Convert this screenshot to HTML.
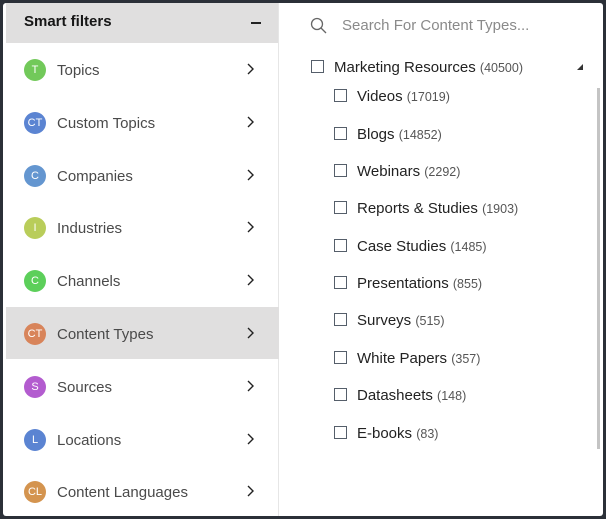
<!DOCTYPE html>
<html><head><style>
*{margin:0;padding:0;box-sizing:border-box}
body{width:606px;height:519px;background:#2b3038;font-family:"Liberation Sans",sans-serif;overflow:hidden;position:relative}
.frame{position:absolute;left:3px;top:3px;width:600px;height:513px;background:#fff;border-radius:3px;overflow:hidden}
.left{position:absolute;left:3px;top:0;width:273px;height:513px;border-right:1px solid #e6e6e6}
.hdr{height:40px;background:#e0dfdf;position:relative;font-weight:bold;font-size:15px;color:#161616;line-height:38px;padding-left:18px}
.hdr i{position:absolute;right:17px;top:19px;width:10px;height:1.5px;background:#222}
.row{position:absolute;left:0;width:273px;height:52px;font-size:15px;color:#4a4a4a}
.row.sel{background:#e0dfdf}
.row .ic{position:absolute;left:18px;top:16px;width:22px;height:22px;border-radius:50%;color:#fff;font-size:11px;text-align:center;line-height:22px}
.row .t{position:absolute;left:51px;top:2px;line-height:52px}
.row .ch{position:absolute;left:238px;top:16px;width:14px;height:20px}
.right{position:absolute;left:277px;top:0;width:323px;height:513px}
.search{position:absolute;left:62px;top:14px;font-size:15px;color:#8a8a8a;line-height:18px}
.item{position:absolute;font-size:15px;color:#222;white-space:nowrap;line-height:20px}
.item .cb{display:inline-block;width:13px;height:13px;border:1.5px solid #555e6a;vertical-align:-1px;margin-right:10px}
.item small{font-size:12.5px;color:#555}
.sb{position:absolute;left:594px;top:85px;width:3px;height:361px;background:#c4c4c4}
</style></head><body>
<div class="frame">
<div class="left">
<div class="hdr">Smart filters<i></i></div>
<div class="row" style="top:40px"><div class="ic" style="background:#72c95a">T</div><div class="t">Topics</div><svg class="ch" viewBox="0 0 14 20"><path d="M4 5l5 5-5 5" fill="none" stroke="#222" stroke-width="1.4"/></svg></div>
<div class="row" style="top:93px"><div class="ic" style="background:#5b84d2">CT</div><div class="t">Custom Topics</div><svg class="ch" viewBox="0 0 14 20"><path d="M4 5l5 5-5 5" fill="none" stroke="#222" stroke-width="1.4"/></svg></div>
<div class="row" style="top:146px"><div class="ic" style="background:#6496d0">C</div><div class="t">Companies</div><svg class="ch" viewBox="0 0 14 20"><path d="M4 5l5 5-5 5" fill="none" stroke="#222" stroke-width="1.4"/></svg></div>
<div class="row" style="top:198px"><div class="ic" style="background:#b9cd5a">I</div><div class="t">Industries</div><svg class="ch" viewBox="0 0 14 20"><path d="M4 5l5 5-5 5" fill="none" stroke="#222" stroke-width="1.4"/></svg></div>
<div class="row" style="top:251px"><div class="ic" style="background:#5ccf5a">C</div><div class="t">Channels</div><svg class="ch" viewBox="0 0 14 20"><path d="M4 5l5 5-5 5" fill="none" stroke="#222" stroke-width="1.4"/></svg></div>
<div class="row sel" style="top:304px"><div class="ic" style="background:#d8845a">CT</div><div class="t">Content Types</div><svg class="ch" viewBox="0 0 14 20"><path d="M4 5l5 5-5 5" fill="none" stroke="#222" stroke-width="1.4"/></svg></div>
<div class="row" style="top:357px"><div class="ic" style="background:#b35ccf">S</div><div class="t">Sources</div><svg class="ch" viewBox="0 0 14 20"><path d="M4 5l5 5-5 5" fill="none" stroke="#222" stroke-width="1.4"/></svg></div>
<div class="row" style="top:410px"><div class="ic" style="background:#5b84d2">L</div><div class="t">Locations</div><svg class="ch" viewBox="0 0 14 20"><path d="M4 5l5 5-5 5" fill="none" stroke="#222" stroke-width="1.4"/></svg></div>
<div class="row" style="top:462px"><div class="ic" style="background:#d4944f">CL</div><div class="t">Content Languages</div><svg class="ch" viewBox="0 0 14 20"><path d="M4 5l5 5-5 5" fill="none" stroke="#222" stroke-width="1.4"/></svg></div>
</div>
<div class="right">
<svg style="position:absolute;left:30px;top:14px" width="18" height="18" viewBox="0 0 18 18"><circle cx="7" cy="7" r="5.5" fill="none" stroke="#666" stroke-width="1.3"/><line x1="11" y1="11" x2="16" y2="16" stroke="#666" stroke-width="1.3"/></svg>
<div class="search">Search For Content Types...</div>
<div class="item" style="left:31px;top:55px"><span class="cb"></span>Marketing Resources <small>(40500)</small></div>
<svg style="position:absolute;left:296px;top:60px" width="8" height="8"><polygon points="1,7 7,7 7,1" fill="#333"/></svg>
<div class="item" style="left:54px;top:84px"><span class="cb"></span>Videos <small>(17019)</small></div>
<div class="item" style="left:54px;top:122px"><span class="cb"></span>Blogs <small>(14852)</small></div>
<div class="item" style="left:54px;top:159px"><span class="cb"></span>Webinars <small>(2292)</small></div>
<div class="item" style="left:54px;top:196px"><span class="cb"></span>Reports &amp; Studies <small>(1903)</small></div>
<div class="item" style="left:54px;top:234px"><span class="cb"></span>Case Studies <small>(1485)</small></div>
<div class="item" style="left:54px;top:271px"><span class="cb"></span>Presentations <small>(855)</small></div>
<div class="item" style="left:54px;top:308px"><span class="cb"></span>Surveys <small>(515)</small></div>
<div class="item" style="left:54px;top:346px"><span class="cb"></span>White Papers <small>(357)</small></div>
<div class="item" style="left:54px;top:383px"><span class="cb"></span>Datasheets <small>(148)</small></div>
<div class="item" style="left:54px;top:421px"><span class="cb"></span>E-books <small>(83)</small></div>
</div>
<div class="sb"></div>
</div>
</body></html>
